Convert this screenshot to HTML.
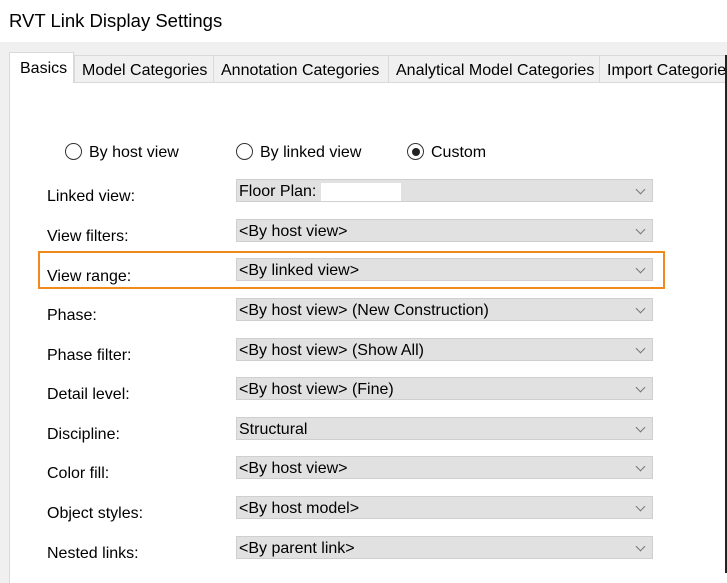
<!DOCTYPE html>
<html><head><style>
body{margin:0;width:727px;height:573px;overflow:hidden;background:#f0f0f0;font-family:"Liberation Sans",sans-serif;font-size:16px;color:#000;position:relative}
.a{position:absolute}
.title{left:0;top:0;width:727px;height:42px;background:#fff}
.title span{position:absolute;left:9px;top:10px;font-size:18.5px}
.panel{left:9px;top:82px;width:730px;height:500px;background:#fff;border-left:1px solid #d9d9d9;border-top:1px solid #d9d9d9}
.tab{top:55px;height:27px;border:1px solid #d9d9d9;border-bottom:none;background:#f0f0f0;line-height:30px;padding:0 7px;box-sizing:border-box;white-space:nowrap}
.lbl{left:47px}
.dd{left:236px;width:417px;height:23px;background:#e1e1e1;border:1px solid #cfcfcf;box-sizing:border-box;line-height:23px;padding-left:2px}
.dd:after{content:"";position:absolute;right:8px;top:6px;width:6px;height:6px;border-right:1px solid #777;border-bottom:1px solid #777;transform:rotate(45deg)}
.rad{width:17px;height:17px;border:1.5px solid #333;border-radius:50%;box-sizing:border-box;top:143px}
</style></head><body>
<div class="a title"><span>RVT Link Display Settings</span></div>
<div class="a panel"></div>
<div class="a tab" style="left:74px;width:140px">Model Categories</div>
<div class="a tab" style="left:213px;width:176px">Annotation Categories</div>
<div class="a tab" style="left:388px;width:212px">Analytical Model Categories</div>
<div class="a tab" style="left:599px;width:140px">Import Categories</div>
<div class="a" style="left:9px;top:52px;width:65px;height:31px;background:#fff;border:1px solid #d9d9d9;border-bottom:none;box-sizing:border-box;padding:7px 0 0 10px">Basics</div>
<div class="a" style="left:725px;top:55px;width:2px;height:518px;background:#222"></div>

<div class="a rad" style="left:65px"></div><div class="a" style="left:89px;top:144px">By host view</div>
<div class="a rad" style="left:236px"></div><div class="a" style="left:260px;top:144px">By linked view</div>
<div class="a rad" style="left:407px"></div><div class="a" style="left:411.5px;top:147.5px;width:8px;height:8px;border-radius:50%;background:#222"></div><div class="a" style="left:431px;top:144px">Custom</div>

<div class="a lbl" style="top:188px">Linked view:</div><div class="a dd" style="top:179px">Floor Plan: <span style="display:inline-block;width:80px;height:18px;background:#fff;vertical-align:middle"></span></div>
<div class="a lbl" style="top:228px">View filters:</div><div class="a dd" style="top:219px">&lt;By host view&gt;</div>
<div class="a lbl" style="top:268px">View range:</div><div class="a dd" style="top:258px">&lt;By linked view&gt;</div>
<div class="a lbl" style="top:307px">Phase:</div><div class="a dd" style="top:298px">&lt;By host view&gt; (New Construction)</div>
<div class="a lbl" style="top:347px">Phase filter:</div><div class="a dd" style="top:338px">&lt;By host view&gt; (Show All)</div>
<div class="a lbl" style="top:386px">Detail level:</div><div class="a dd" style="top:377px">&lt;By host view&gt; (Fine)</div>
<div class="a lbl" style="top:426px">Discipline:</div><div class="a dd" style="top:417px">Structural</div>
<div class="a lbl" style="top:465px">Color fill:</div><div class="a dd" style="top:456px">&lt;By host view&gt;</div>
<div class="a lbl" style="top:505px">Object styles:</div><div class="a dd" style="top:496px">&lt;By host model&gt;</div>
<div class="a lbl" style="top:545px">Nested links:</div><div class="a dd" style="top:536px">&lt;By parent link&gt;</div>

<div class="a" style="left:38px;top:251px;width:627px;height:38px;border:2px solid #f08a1c;box-sizing:border-box"></div>
</body></html>
